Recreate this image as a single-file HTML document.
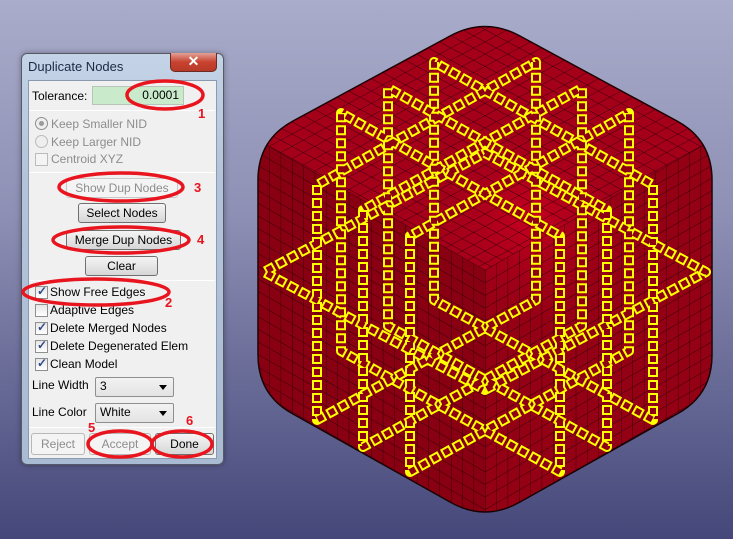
<!DOCTYPE html>
<html><head><meta charset="utf-8"><style>
*{margin:0;padding:0;box-sizing:border-box}
body{width:733px;height:539px;overflow:hidden;position:relative;background:linear-gradient(#aaaccb,#8d8fb4 40%,#45477a);font-family:"Liberation Sans",sans-serif;font-size:12px;color:#000}
.a{position:absolute}
.win{left:21px;top:53px;width:203px;height:412px;border:1px solid #555a66;border-radius:6px;background:linear-gradient(#c4d3e6,#b3c4da 30%,#a9bbd2);box-shadow:0 0 6px rgba(0,0,0,.35)}
.close{left:170px;top:53px;width:47px;height:19px;border:1px solid #6b2a26;border-top:none;border-radius:0 0 5px 5px;background:linear-gradient(#e2a196,#c8432f 50%,#b83a28);color:#fff;font-weight:bold;text-align:center;font-size:14px;line-height:17px}
.body{left:28px;top:80px;width:189px;height:379px;background:#f0f0f0;border:1px solid #8a9ab0}
.sep{height:1px;background:#a0a0a0;border-bottom:1px solid #fff;left:30px;width:185px}
.btn{border:1px solid #707070;border-radius:3px;background:linear-gradient(#f4f4f4,#e6e6e6 50%,#d6d6d6);text-align:center;line-height:18px}
.gray{color:#8d8d8d}
.cb{width:13px;height:13px;border:1px solid #8e8f8f;background:linear-gradient(#e6e6e6,#fff)}
.ck::after{content:"✓";position:absolute;left:1px;top:-3px;font-size:12px;color:#2f4a86;font-weight:bold}
.sel{border:1px solid #8e8f8f;border-radius:2px;background:linear-gradient(#f2f2f2,#e3e3e3);padding-left:4px;line-height:17px}
.sel::after{content:"";position:absolute;right:6px;top:7px;border:4px solid transparent;border-top:5px solid #000}
.num{color:#e8141e;font-weight:bold;font-size:13px}
</style></head><body>
<svg class="a" style="left:0;top:0" width="733" height="539">
<defs>
<pattern id="pt" patternUnits="userSpaceOnUse" width="1" height="1" patternTransform="matrix(11.35 6.15 -11.35 6.15 485 17)"><path d="M0 0H1M0 0V1" stroke="#2a0006" stroke-width="0.07" fill="none"/></pattern>
<pattern id="pl" patternUnits="userSpaceOnUse" width="1" height="1" patternTransform="matrix(11.35 6.5 0 12.6 258 140)"><path d="M0 0H1M0 0V1" stroke="#2a0006" stroke-width="0.07" fill="none"/></pattern>
<pattern id="pr" patternUnits="userSpaceOnUse" width="1" height="1" patternTransform="matrix(11.35 -6.5 0 12.6 485 270)"><path d="M0 0H1M0 0V1" stroke="#2a0006" stroke-width="0.07" fill="none"/></pattern>
<radialGradient id="hl" cx="530" cy="220" r="120" gradientUnits="userSpaceOnUse"><stop offset="0" stop-color="#c4001f"/><stop offset="1" stop-color="#9a0018" stop-opacity="0"/></radialGradient>
<clipPath id="cl"><path id="sil" d="M450 36Q485 17 520 36L677 121Q712 140 712 180L712 355Q712 395 677 414L520 502Q485 522 450 502L293 414Q258 395 258 355L258 180Q258 140 293 121Z"/></clipPath>
</defs>
<g clip-path="url(#cl)">
<rect x="250" y="10" width="470" height="520" fill="#8a0012"/>
<path d="M485 17L712 140L485 270L258 140Z" fill="#a4001a"/>
<path d="M258 140L485 270V525L258 395Z" fill="#880011"/>
<path d="M712 140L485 270V525L712 395Z" fill="#940014"/>
<path d="M712 140L485 270V525L712 395Z" fill="url(#hl)"/>
<path d="M485 17L712 140L485 270L258 140Z" fill="url(#hl)"/>
<path d="M485 17L712 140L485 270L258 140Z" fill="url(#pt)"/>
<path d="M258 140L485 270V525L258 395Z" fill="url(#pl)"/>
<path d="M712 140L485 270V525L712 395Z" fill="url(#pr)"/>
</g>
<path d="M450 36Q485 17 520 36L677 121Q712 140 712 180L712 355Q712 395 677 414L520 502Q485 522 450 502L293 414Q258 395 258 355L258 180Q258 140 293 121Z" fill="none" stroke="#1a0004" stroke-width="1.5"/>
<g fill="none" stroke-linejoin="round">
<g stroke="#ffff00" stroke-width="10" stroke-dasharray="10 3">
<path d="M317 185V420L536 300V62Z M363 210V447L582 326V88Z M410 236V472L629 351V113Z M653 185V420L434 300V62Z M607 210V447L388 326V88Z M560 236V472L341 351V113Z M485 390L706 272L485 153L264 272Z"/>
</g>
<g stroke="#8e0014" stroke-width="6" stroke-dasharray="6 7" stroke-dashoffset="-2">
<path d="M317 185V420L536 300V62Z M363 210V447L582 326V88Z M410 236V472L629 351V113Z M653 185V420L434 300V62Z M607 210V447L388 326V88Z M560 236V472L341 351V113Z M485 390L706 272L485 153L264 272Z"/>
</g>
</g>
</svg>

<div class="a win"></div>
<div class="a" style="left:28px;top:59px;font-size:13px;color:#1b2a44">Duplicate Nodes</div>
<div class="a close">✕</div>
<div class="a body"></div>

<div class="a" style="left:32px;top:89px">Tolerance:</div>
<div class="a" style="left:92px;top:86px;width:92px;height:19px;background:#c9ebcb;border:1px solid #b8c4b8;text-align:right;padding-right:4px;line-height:17px">0.0001</div>
<div class="a sep" style="top:110px"></div>
<div class="a cb" style="left:35px;top:117px;border-radius:50%;background:#eee"></div>
<div class="a" style="left:39px;top:121px;width:5px;height:5px;border-radius:50%;background:#999"></div>
<div class="a gray" style="left:51px;top:117px">Keep Smaller NID</div>
<div class="a cb" style="left:35px;top:135px;border-radius:50%;background:#eee;border-color:#bbb"></div>
<div class="a gray" style="left:51px;top:135px">Keep Larger NID</div>
<div class="a cb" style="left:35px;top:153px;background:#f4f4f4;border-color:#bbb"></div>
<div class="a gray" style="left:51px;top:152px">Centroid XYZ</div>
<div class="a sep" style="top:172px"></div>

<div class="a btn gray" style="left:66px;top:178px;width:112px;height:20px;border-color:#c8c8c8;background:#f4f4f4">Show Dup Nodes</div>
<div class="a btn" style="left:78px;top:203px;width:88px;height:20px">Select Nodes</div>
<div class="a btn" style="left:66px;top:230px;width:115px;height:20px">Merge Dup Nodes</div>
<div class="a btn" style="left:85px;top:256px;width:73px;height:20px">Clear</div>
<div class="a sep" style="top:280px"></div>

<div class="a cb ck" style="left:35px;top:286px"></div><div class="a" style="left:50px;top:285px">Show Free Edges</div>
<div class="a cb" style="left:35px;top:304px"></div><div class="a" style="left:50px;top:303px">Adaptive Edges</div>
<div class="a cb ck" style="left:35px;top:322px"></div><div class="a" style="left:50px;top:321px">Delete Merged Nodes</div>
<div class="a cb ck" style="left:35px;top:340px"></div><div class="a" style="left:50px;top:339px">Delete Degenerated Elem</div>
<div class="a cb ck" style="left:35px;top:358px"></div><div class="a" style="left:50px;top:357px">Clean Model</div>
<div class="a" style="left:32px;top:378px">Line Width</div>
<div class="a sel" style="left:95px;top:377px;width:79px;height:20px">3</div>
<div class="a" style="left:32px;top:405px">Line Color</div>
<div class="a sel" style="left:95px;top:403px;width:79px;height:20px">White</div>
<div class="a sep" style="top:427px"></div>
<div class="a btn gray" style="left:31px;top:433px;width:54px;height:22px;border-color:#b8b8b8;background:#f4f4f4;line-height:20px">Reject</div>
<div class="a btn gray" style="left:89px;top:433px;width:62px;height:22px;border-color:#b8b8b8;background:#f4f4f4;line-height:20px">Accept</div>
<div class="a btn" style="left:155px;top:433px;width:59px;height:22px;line-height:20px">Done</div>

<svg class="a" style="left:0;top:0" width="240" height="539">
<g fill="none" stroke="#e8141e" stroke-width="3.5">
<ellipse cx="165" cy="95" rx="38" ry="14"/>
<ellipse cx="121" cy="187" rx="62" ry="14"/>
<ellipse cx="121" cy="240" rx="68" ry="13"/>
<ellipse cx="96" cy="292" rx="73" ry="13"/>
<ellipse cx="120" cy="444" rx="32" ry="13"/>
<ellipse cx="182" cy="444" rx="30" ry="13"/>
</g>
</svg>
<div class="a num" style="left:198px;top:106px">1</div>
<div class="a num" style="left:165px;top:295px">2</div>
<div class="a num" style="left:194px;top:180px">3</div>
<div class="a num" style="left:197px;top:232px">4</div>
<div class="a num" style="left:88px;top:420px">5</div>
<div class="a num" style="left:186px;top:413px">6</div>
</body></html>
